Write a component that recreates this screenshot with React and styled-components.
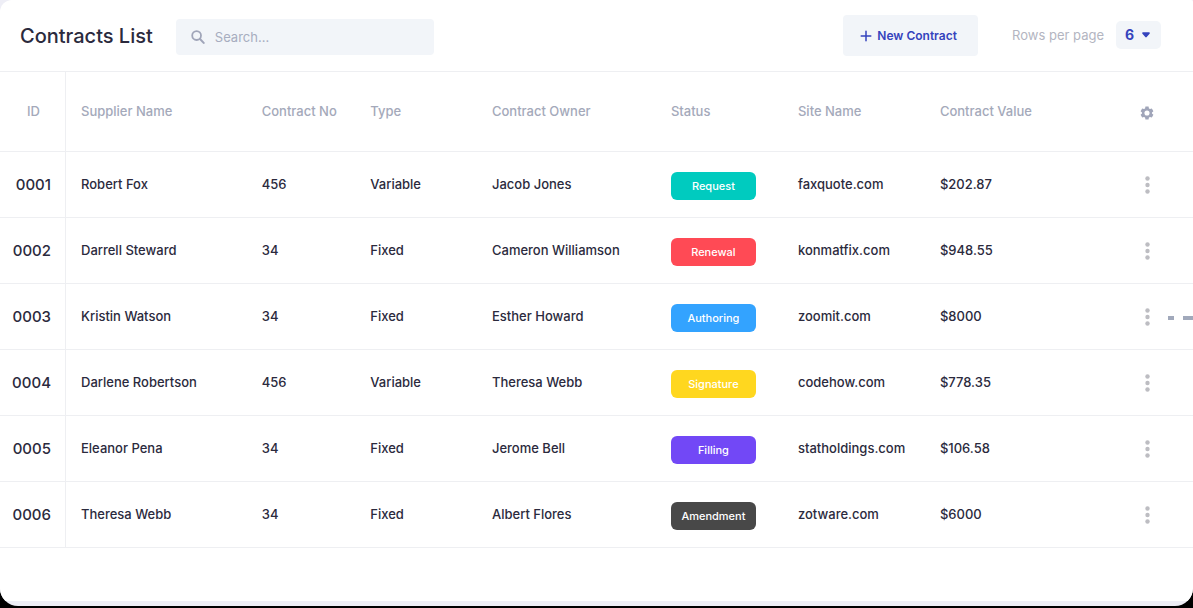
import React from "react";
import styled, { createGlobalStyle } from "styled-components";

const GlobalStyle = createGlobalStyle`
  *, *::before, *::after { box-sizing: border-box; }
  body {
    margin: 0;
    background: #000;
    color: #2b2a3d;
    font-family: Inter, "Liberation Sans", sans-serif;
    font-size: 13px;
  }
  button, input, select { font: inherit; }
`;

const Page = styled.div`
  min-height: 100vh;
  padding-bottom: 2px;
  display: flex;
`;

const Frame = styled.div`
  flex: 1;
  min-width: 0;
  display: flex;
  padding-bottom: 5px;
  background: #eeeef6;
  border-radius: 0 0 18px 18px;
  overflow: hidden;
`;

const Card = styled.main`
  flex: 1;
  min-width: 0;
  background: #fff;
  border-radius: 12px 2px 0 0;
`;

const Toolbar = styled.header`
  display: flex;
  align-items: center;
  height: 71px;
  padding: 0 32px 0 20px;
`;

const Title = styled.h1`
  margin: 0 23px 0 0;
  font-size: 20px;
  line-height: 24px;
  font-weight: 500;
  white-space: nowrap;
`;

const SearchBox = styled.label`
  display: flex;
  align-items: center;
  gap: 10px;
  flex: 0 1 258px;
  height: 36px;
  margin-top: 2px;
  padding: 0 15px;
  border-radius: 4px;
  background: #f2f5f9;
  color: #a0a5b9;
`;

const SearchInput = styled.input`
  flex: 1;
  min-width: 0;
  padding: 0;
  border: 0;
  outline: 0;
  background: transparent;
  color: #2b2a3d;
  &::placeholder { color: #a7adc0; opacity: 1; }
`;

const Actions = styled.div`
  display: flex;
  align-items: center;
  margin-left: auto;
`;

const NewButton = styled.button`
  display: flex;
  align-items: center;
  justify-content: center;
  gap: 5px;
  width: 135px;
  height: 41px;
  padding: 0 4px 0 0;
  border: 0;
  border-radius: 4px;
  background: #f2f5f9;
  color: #3543bd;
  font-size: 12px;
  font-weight: 600;
  white-space: nowrap;
`;

const RowsPerPage = styled.div`
  display: flex;
  align-items: center;
  gap: 12px;
  margin: 0 0 2px 34px;
`;

const RowsLabel = styled.label`
  color: #b3b5c1;
  white-space: nowrap;
`;

const SelectWrap = styled.div`
  display: grid;
  align-items: center;
  width: 45px;
  height: 28px;
  border-radius: 5px;
  background: #f2f5f9;
  color: #3543bd;
  > * { grid-area: 1 / 1; }
  > svg { justify-self: end; margin-right: 11px; pointer-events: none; }
`;

const RowsSelect = styled.select`
  appearance: none;
  width: 100%;
  height: 100%;
  padding: 0 0 0 9px;
  border: 0;
  background: transparent;
  color: inherit;
  font-size: 14px;
  font-weight: 700;
`;

const Table = styled.table`
  width: 100%;
  table-layout: fixed;
  border-collapse: separate;
  border-spacing: 0;
  border-top: 1px solid #eeeff2;
`;

const Col = styled.col`
  width: ${(p) => p.$width};
`;

const HeadCell = styled.th`
  height: 80px;
  padding: 0 0 2px 15px;
  border-bottom: 1px solid #eeeff2;
  color: #a4a9ba;
  font-weight: 500;
  text-align: left;
  white-space: nowrap;
  &:first-child { padding: 0 0 2px 2px; text-align: center; border-right: 1px solid #eeeff2; }
  &:last-child { padding: 2px 0 0; text-align: center; }
`;

const Cell = styled.td`
  height: 66px;
  padding: 0 0 2px 15px;
  border-bottom: 1px solid #eeeff2;
  font-weight: 500;
  white-space: nowrap;
`;

const IdCell = styled.th`
  padding: 0 14px 0 0;
  border-right: 1px solid #eeeff2;
  border-bottom: 1px solid #eeeff2;
  font-size: 15px;
  font-weight: 500;
  text-align: right;
`;

const MenuCell = styled(Cell)`
  position: relative;
  padding: 0;
  text-align: center;
`;

const Badge = styled.span`
  display: block;
  width: 85px;
  margin-top: 4px;
  border-radius: 6px;
  background: ${(p) => p.$color};
  color: #fff;
  font-size: 11px;
  line-height: 28px;
  font-weight: 500;
  text-align: center;
`;

const IconButton = styled.button`
  display: inline-flex;
  align-items: center;
  justify-content: center;
  width: 24px;
  height: 24px;
  padding: 0;
  border: 0;
  background: transparent;
  color: ${(p) => p.$color};
  vertical-align: middle;
`;

const Connector = styled.svg`
  position: absolute;
  top: 32px;
  right: 0;
`;

const SearchIcon = () => (
  <svg width="14" height="14" viewBox="0 0 14 14" fill="none" stroke="currentColor" strokeLinecap="round" aria-hidden="true">
    <circle cx="5.6" cy="5.6" r="4.4" strokeWidth="1.8" />
    <path d="M9 9l3.700 3.900" strokeWidth="2" />
  </svg>
);

const PlusIcon = () => (
  <svg width="12" height="12" viewBox="0 0 12 12" stroke="currentColor" strokeWidth="1.500" strokeLinecap="round" aria-hidden="true">
    <path d="M6 1.200v9.600M1.200 6h9.600" />
  </svg>
);

const CaretIcon = () => (
  <svg width="8" height="6" viewBox="0 0 8 6" fill="currentColor" aria-hidden="true">
    <path d="M1 .3h6c.8 0 1.100.8.6 1.400L4.700 5.100c-.4.5-1 .5-1.400 0L.4 1.700C-.1 1.100.2.3 1 .3z" />
  </svg>
);

const GearIcon = () => (
  <svg width="14" height="14" viewBox="0 0 24 24" fill="currentColor" aria-hidden="true">
    <path fillRule="evenodd" d="M9.300 1h5.400l.6 3.200 1.900 1.100 3.100-1.100 2.700 4.700-2.500 2.100v2l2.500 2.100-2.700 4.700-3.100-1.100-1.900 1.100-.6 3.300H9.300l-.6-3.300-1.900-1.100-3.100 1.100L1 15.100 3.500 13v-2L1 8.900l2.700-4.700 3.100 1.100 1.900-1.100zM12 7.600a4.400 4.400 0 1 0 0 8.800 4.400 4.400 0 0 0 0-8.800z" />
  </svg>
);

const DotsIcon = () => (
  <svg width="6" height="18" viewBox="0 0 6 18" fill="currentColor" aria-hidden="true">
    <circle cx="3.500" cy="2.500" r="2.200" />
    <circle cx="3.500" cy="9" r="2.200" />
    <circle cx="3.500" cy="15.500" r="2.200" />
  </svg>
);

const columns = ["ID", "Supplier Name", "Contract No", "Type", "Contract Owner", "Status", "Site Name", "Contract Value"];
const widths = ["66px", "15.15%", "9.1%", "10.2%", "15%", "10.65%", "11.9%", "14.8%", "auto"];

const contracts = [
  { id: "0001", supplier: "Robert Fox", no: "456", type: "Variable", owner: "Jacob Jones", status: "Request", color: "#00cbbf", site: "faxquote.com", value: "$202.87" },
  { id: "0002", supplier: "Darrell Steward", no: "34", type: "Fixed", owner: "Cameron Williamson", status: "Renewal", color: "#ff4a55", site: "konmatfix.com", value: "$948.55" },
  { id: "0003", supplier: "Kristin Watson", no: "34", type: "Fixed", owner: "Esther Howard", status: "Authoring", color: "#33a3ff", site: "zoomit.com", value: "$8000", linked: true },
  { id: "0004", supplier: "Darlene Robertson", no: "456", type: "Variable", owner: "Theresa Webb", status: "Signature", color: "#ffd71f", site: "codehow.com", value: "$778.35" },
  { id: "0005", supplier: "Eleanor Pena", no: "34", type: "Fixed", owner: "Jerome Bell", status: "Filling", color: "#7248f6", site: "statholdings.com", value: "$106.58" },
  { id: "0006", supplier: "Theresa Webb", no: "34", type: "Fixed", owner: "Albert Flores", status: "Amendment", color: "#484848", site: "zotware.com", value: "$6000" },
];

const ContractRow = ({ contract }) => (
  <tr>
    <IdCell scope="row">{contract.id}</IdCell>
    <Cell>{contract.supplier}</Cell>
    <Cell>{contract.no}</Cell>
    <Cell>{contract.type}</Cell>
    <Cell>{contract.owner}</Cell>
    <Cell><Badge $color={contract.color}>{contract.status}</Badge></Cell>
    <Cell>{contract.site}</Cell>
    <Cell>{contract.value}</Cell>
    <MenuCell>
      <IconButton type="button" $color="#bdbdc2" aria-label={`Actions for ${contract.id}`}><DotsIcon /></IconButton>
      {contract.linked && (
        <Connector width="25" height="4" viewBox="0 0 25 4" fill="#a1a9bb" aria-hidden="true">
          <path d="M0 0h6v4H0zM15 0h10v4H15z" />
        </Connector>
      )}
    </MenuCell>
  </tr>
);

export default function App() {
  return (
    <>
      <GlobalStyle />
      <Page>
        <Frame>
          <Card>
            <Toolbar>
              <Title>Contracts List</Title>
              <SearchBox>
                <SearchIcon />
                <SearchInput type="search" placeholder="Search..." aria-label="Search contracts" />
              </SearchBox>
              <Actions>
                <NewButton type="button"><PlusIcon />New Contract</NewButton>
                <RowsPerPage>
                  <RowsLabel htmlFor="rows">Rows per page</RowsLabel>
                  <SelectWrap>
                    <RowsSelect id="rows" defaultValue="6">
                      <option>6</option>
                      <option>12</option>
                      <option>24</option>
                    </RowsSelect>
                    <CaretIcon />
                  </SelectWrap>
                </RowsPerPage>
              </Actions>
            </Toolbar>
            <Table>
              <colgroup>{widths.map((w, i) => <Col key={i} $width={w} />)}</colgroup>
              <thead>
                <tr>
                  {columns.map((c) => <HeadCell key={c} scope="col">{c}</HeadCell>)}
                  <HeadCell scope="col">
                    <IconButton type="button" $color="#a0a5b9" aria-label="Table settings"><GearIcon /></IconButton>
                  </HeadCell>
                </tr>
              </thead>
              <tbody>{contracts.map((c) => <ContractRow key={c.id} contract={c} />)}</tbody>
            </Table>
          </Card>
        </Frame>
      </Page>
    </>
  );
}
